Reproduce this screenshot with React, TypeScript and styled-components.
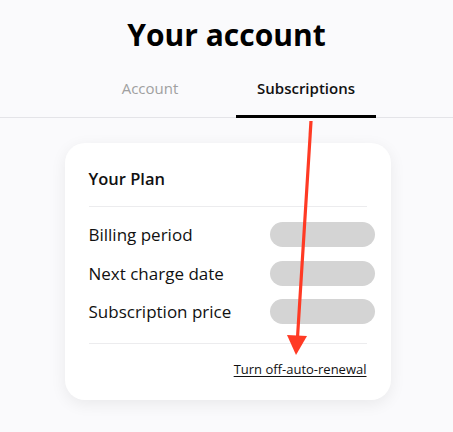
import { FC } from "react";
import styled, { createGlobalStyle } from "styled-components";

const GlobalStyle = createGlobalStyle`
  html, body {
    margin: 0;
    padding: 0;
    background: #fafafc;
    font-family: "Open Sans", "Liberation Sans", sans-serif;
    color: #111;
  }
`;

const Page = styled.div`
  position: relative;
  width: 453px;
  height: 432px;
  overflow: hidden;
  background: #fafafc;
`;

const Title = styled.h1`
  margin: 0;
  padding-top: 15px;
  text-align: center;
  font-size: 30px;
  line-height: 40px;
  font-weight: 700;
  color: #000;
`;

const TabBar = styled.div`
  display: flex;
  justify-content: center;
  gap: 16px;
  margin-top: 20px;
  padding-left: 3px;
  border-bottom: 1px solid #e4e4e8;
`;

const Tab = styled.div<{ active?: boolean }>`
  width: 140px;
  height: 43px;
  box-sizing: border-box;
  text-align: center;
  font-size: 15px;
  line-height: 26px;
  font-weight: ${(p) => (p.active ? 600 : 500)};
  color: ${(p) => (p.active ? "#111" : "#a0a0a0")};
  border-bottom: 3px solid ${(p) => (p.active ? "#000" : "transparent")};
  margin-bottom: -1px;
`;

const Content = styled.div`
  display: flex;
  justify-content: center;
  padding-top: 25px;
  padding-left: 2px;
`;

const Card = styled.div`
  width: 326px;
  box-sizing: border-box;
  background: #fff;
  border-radius: 20px;
  padding: 23px 24px 22px;
  box-shadow: 0 4px 16px rgba(0, 0, 0, 0.07);
`;

const CardTitle = styled.div`
  font-size: 16.5px;
  line-height: 26px;
  font-weight: 600;
  padding-bottom: 14px;
  border-bottom: 1px solid #ececee;
`;

const Rows = styled.div`
  display: flex;
  flex-direction: column;
  gap: 13.5px;
  padding: 15px 0 19px;
  border-bottom: 1px solid #ececee;
`;

const Row = styled.div`
  display: flex;
  align-items: center;
  justify-content: space-between;
  height: 25px;
`;

const Label = styled.span`
  font-size: 17px;
  color: #111;
`;

const Placeholder = styled.div`
  width: 105px;
  height: 25px;
  margin-right: -8px;
  border-radius: 13px;
  background: #d4d4d4;
`;

const Footer = styled.div`
  display: flex;
  justify-content: flex-end;
  padding-top: 16px;
`;

const Link = styled.a`
  font-size: 13px;
  line-height: 18px;
  color: #111;
  text-decoration: underline;
  text-underline-offset: 2px;
`;

const Annotation = styled.svg`
  position: absolute;
  left: 0;
  top: 0;
  pointer-events: none;
`;

const rows = ["Billing period", "Next charge date", "Subscription price"];

const App: FC = () => {
  return (
    <Page>
      <GlobalStyle />
      <Title>Your account</Title>
      <TabBar>
        <Tab>Account</Tab>
        <Tab active>Subscriptions</Tab>
      </TabBar>
      <Content>
        <Card>
          <CardTitle>Your Plan</CardTitle>
          <Rows>
            {rows.map((r) => (
              <Row key={r}>
                <Label>{r}</Label>
                <Placeholder />
              </Row>
            ))}
          </Rows>
          <Footer>
            <Link>Turn off-auto-renewal</Link>
          </Footer>
        </Card>
      </Content>
      <Annotation width="453" height="432" viewBox="0 0 453 432">
        <line x1="311" y1="121" x2="297.5" y2="338" stroke="#ff3a24" strokeWidth="3.2" />
        <polygon points="287,335 307,336 296,355" fill="#ff3a24" />
      </Annotation>
    </Page>
  );
};

export default App;
